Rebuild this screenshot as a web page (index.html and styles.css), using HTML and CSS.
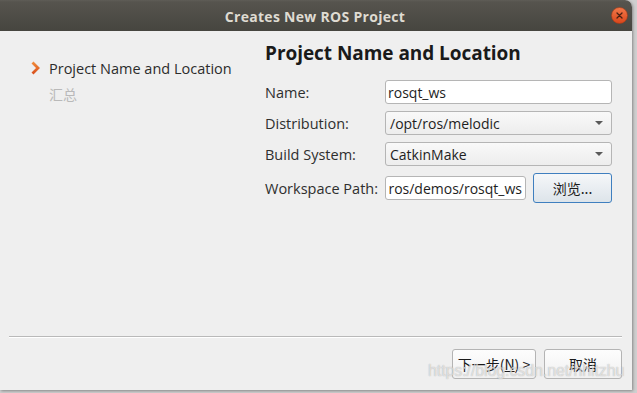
FILE: index.html
```html
<!DOCTYPE html>
<html>
<head>
<meta charset="utf-8">
<link rel="stylesheet" href="styles.css">
</head>
<body>
<div class="window">
  <div class="titlebar">
    <span class="title">Creates New ROS Project</span>
    <span class="close">
      <svg width="17" height="17" viewBox="0 0 17 17">
        <defs>
          <linearGradient id="cg" x1="0" y1="0" x2="0" y2="1">
            <stop offset="0" stop-color="#f2794a"/>
            <stop offset="1" stop-color="#d9461b"/>
          </linearGradient>
        </defs>
        <circle cx="8.5" cy="8.5" r="8" fill="url(#cg)" stroke="#a83a16" stroke-width="0.6"/>
        <path d="M6 6 L11 11 M11 6 L6 11" stroke="#4a2012" stroke-width="1.3" stroke-linecap="round"/>
      </svg>
    </span>
  </div>
  <div class="content">
    <div class="main">
      <nav class="steps">
        <div class="step active">
          <svg class="chev" width="9" height="14" viewBox="0 0 9 14">
            <defs>
              <linearGradient id="ag" x1="0" y1="0" x2="0" y2="1">
                <stop offset="0" stop-color="#f08a3a"/>
                <stop offset="1" stop-color="#d9501c"/>
              </linearGradient>
            </defs>
            <path d="M1.5 1.5 L7 7 L1.5 12.5" fill="none" stroke="url(#ag)" stroke-width="2.8" stroke-linejoin="miter"/>
          </svg>
          <span>Project Name and Location</span>
        </div>
        <div class="step muted"><span>汇总</span></div>
      </nav>
      <section class="page">
        <h1 class="heading">Project Name and Location</h1>
        <div class="form">
          <div class="row">
            <label class="label">Name:</label>
            <div class="field input"><span>rosqt_ws</span></div>
          </div>
          <div class="row">
            <label class="label">Distribution:</label>
            <div class="field combo"><span>/opt/ros/melodic</span><i class="caret"></i></div>
          </div>
          <div class="row">
            <label class="label">Build System:</label>
            <div class="field combo"><span>CatkinMake</span><i class="caret"></i></div>
          </div>
          <div class="row tall">
            <label class="label">Workspace Path:</label>
            <div class="path-group">
              <div class="field input path"><span>ros/demos/rosqt_ws</span></div>
              <button class="btn browse">浏览...</button>
            </div>
          </div>
        </div>
      </section>
    </div>
    <div class="footer">
      <div class="sep"></div>
      <div class="buttons">
        <button class="btn action">下一步(<u>N</u>) &gt;</button>
        <button class="btn action">取消</button>
      </div>
    </div>
  </div>
  <div class="watermark">https://blog.csdn.net/hhitzhu</div>
</div>
</body>
</html>
```
FILE: styles.css
```css
* { box-sizing: border-box; }
html, body { margin: 0; padding: 0; }
body {
  width: 637px;
  height: 393px;
  background: #cfcfcf;
  font-family: "Open Sans", "Noto Sans CJK SC", sans-serif;
  overflow: hidden;
}
.window {
  position: relative;
  width: 632px;
  height: 390px;
  background: #efefef;
  border-top-right-radius: 7px;
  display: flex;
  flex-direction: column;
  box-shadow: 1px 1px 3px rgba(0,0,0,0.35);
}
.titlebar {
  height: 31px;
  flex: none;
  background: linear-gradient(#5f5d57 0, #56544e 2px, #46453f 100%);
  border-top-right-radius: 7px;
  display: flex;
  align-items: center;
  justify-content: center;
  position: relative;
}
.title {
  color: #dfdbd2;
  font-weight: 700;
  font-size: 14px;
  letter-spacing: 0.3px;
  margin-left: -2px;
  margin-top: 1px;
}
.close {
  position: absolute;
  right: 4px;
  top: 7px;
  width: 17px;
  height: 17px;
  display: flex;
}
.content {
  flex: 1;
  display: flex;
  flex-direction: column;
}
.main {
  flex: 1;
  display: flex;
}
.steps {
  width: 265px;
  flex: none;
  padding-top: 24px;
  padding-left: 31px;
}
.step {
  height: 26px;
  display: flex;
  align-items: center;
  padding-left: 18px;
  font-size: 14.5px;
  color: #2c2c2c;
  white-space: nowrap;
}
.step.active { padding-left: 0; }
.step .chev { margin-right: 9px; margin-top: -1px; flex: none; }
.step.muted { color: #b9b9b9; font-family: "Noto Sans CJK SC", sans-serif; font-size: 14px; }
.page {
  flex: 1;
  padding-top: 9px;
  padding-right: 20px;
}
.heading {
  margin: 0;
  font-size: 19px;
  font-weight: 700;
  color: #1a1a1a;
  line-height: 26px;
  height: 26px;
  letter-spacing: -0.05px;
  white-space: nowrap;
}
.form {
  margin-top: 14px;
  display: flex;
  flex-direction: column;
  gap: 7px;
}
.row {
  height: 24px;
  display: flex;
  align-items: center;
}
.row.tall { height: 30px; }
.label {
  width: 120px;
  flex: none;
  font-size: 14.5px;
  color: #2e2e2e;
  white-space: nowrap;
}
.field {
  height: 24px;
  border: 1px solid #b5b5b5;
  border-radius: 3px;
  display: flex;
  align-items: center;
  font-size: 14px;
  color: #1e1e1e;
  white-space: nowrap;
  overflow: hidden;
}
.input {
  width: 227px;
  background: #ffffff;
  padding-left: 2px;
}
.combo {
  width: 227px;
  background: linear-gradient(#f9f9f9, #ededed);
  padding-left: 4px;
  padding-right: 8px;
  justify-content: space-between;
}
.caret {
  width: 0;
  height: 0;
  border-left: 4px solid transparent;
  border-right: 4px solid transparent;
  border-top: 4px solid #5a5a5a;
}
.path-group {
  display: flex;
  align-items: center;
  gap: 7px;
}
.path {
  width: 141px;
  justify-content: flex-end;
  padding-left: 0;
  padding-right: 3px;
}
.btn {
  font-family: "Noto Sans CJK SC", sans-serif;
  font-size: 14px;
  color: #1a1a1a;
  border: 1px solid #b0b0b0;
  border-radius: 3px;
  background: linear-gradient(#fbfbfb, #ececec);
  padding: 0;
  display: flex;
  align-items: center;
  justify-content: center;
}
.browse {
  width: 79px;
  height: 30px;
  border-color: #3f7fbf;
  background: linear-gradient(#f5f7f9, #dde4ea);
}
.footer {
  flex: none;
  height: 54px;
  padding: 0 10px 0 9px;
}
.sep {
  height: 2px;
  border-top: 1px solid #b9b9b9;
  border-bottom: 1px solid #ffffff;
}
.buttons {
  display: flex;
  justify-content: flex-end;
  gap: 8px;
  margin-top: 11px;
}
.action {
  height: 30px;
  background: linear-gradient(#fdfdfd, #f1f1f1);
  border-color: #b4b4b4;
  font-size: 14px;
}
.action:first-child { width: 84px; }
.action:last-child { width: 78px; }
.watermark {
  position: absolute;
  left: 428px;
  top: 362px;
  font-family: "Liberation Sans", sans-serif;
  font-size: 16px;
  color: rgba(255,255,255,0.6);
  text-shadow: 0 0 1px rgba(110,110,110,0.6);
  letter-spacing: -0.1px;
  pointer-events: none;
}
```
